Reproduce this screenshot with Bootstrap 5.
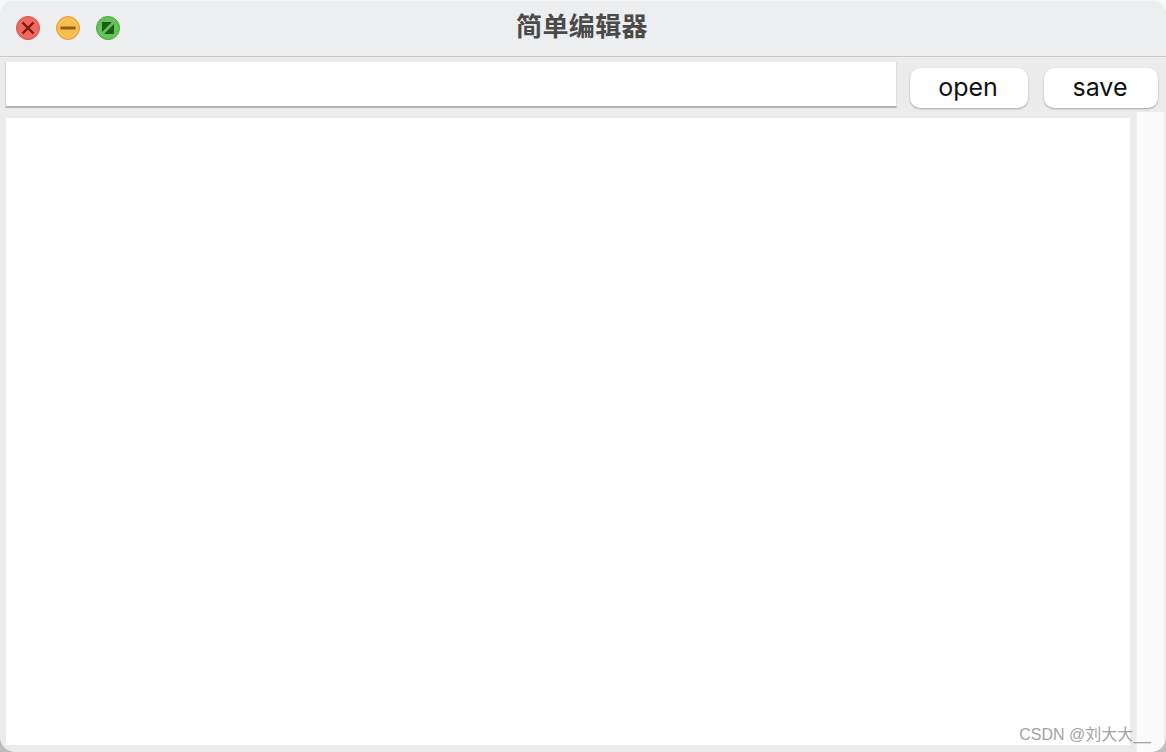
<!DOCTYPE html>
<html lang="zh">

<head>
    <meta charset="UTF-8">
    <meta name="viewport" content="width=device-width, initial-scale=1">
    <title>简单编辑器</title>
    <link href="https://cdn.jsdelivr.net/npm/bootstrap@5.3.0/dist/css/bootstrap.min.css" rel="stylesheet">
    <style>
        html, body { height: 100%; }

        body {
            background: linear-gradient(#f8f8f8 0 50%, #bdbdbd 50%);
            font-family: Inter, "Liberation Sans", "Noto Sans CJK SC", sans-serif;
        }

        .app-window {
            height: 752px;
            background: #ececec;
            border-radius: 15px;
            overflow: hidden;
            position: relative;
        }

        .title-bar {
            height: 57px;
            background: #edeef0;
            border-bottom: 1px solid #c8c8c8;
            box-shadow: inset 0 1px 0 #f7f7f8;
            padding-left: 16px;
            gap: 16px;
        }

        .title-text {
            font-family: "Noto Sans CJK SC", sans-serif;
            font-size: 26px;
            font-weight: 700;
            letter-spacing: 0.4px;
            color: #4a4a4a;
            line-height: 1;
            margin-top: -3px;
            margin-left: -1px;
        }

        .light-btn { width: 24px; height: 24px; display: block; }

        .tool-row { height: 55px; padding-left: 5px; }

        .path-input {
            width: 892px;
            height: 46px;
            margin-top: 5px;
            background: #fff;
            border: 0;
            border-left: 1px solid #d6d6d6;
            border-right: 1px solid #dedede;
            border-bottom: 2px solid #b4b4b4;
            border-radius: 0;
            outline: 0;
        }

        .tool-btn {
            height: 40px;
            margin-top: 11px;
            background: #fff;
            border: 0;
            border-radius: 10px;
            box-shadow: 0 1px 2px rgba(0, 0, 0, .32);
            font-size: 25px;
            line-height: 1;
            color: #111;
            padding: 0 2px 2px 0;
        }

        .btn-open { width: 118px; margin-left: 13px; }
        .btn-save { width: 114px; margin-left: 16px; }

        .edit-row { height: 640px; padding-left: 6px; }

        .edit-area {
            width: 1124px;
            height: 627px;
            margin-top: 6px;
            background: #fff;
            border: 0;
            border-radius: 0;
            outline: 0;
            resize: none;
        }

        .scroll-track {
            width: 28px;
            margin-left: 6px;
            background: #fafafa;
            border-left: 1px solid #f1f1f1;
        }

        .csdn-mark {
            position: absolute;
            right: 15px;
            bottom: 8px;
            font-family: "Liberation Sans", "Noto Sans CJK SC", sans-serif;
            font-size: 16px;
            line-height: 19px;
            color: #a3a3a3;
        }
    </style>
</head>

<body>

    <div class="app-window d-flex flex-column">

        <!-- Title bar -->
        <div class="title-bar d-flex align-items-center position-relative flex-shrink-0">
            <svg class="light-btn" viewBox="0 0 24 24">
                <circle cx="12" cy="12" r="11.5" fill="#ee6a5f" stroke="#d0534a" />
                <path d="M6.5 6.5l11 11M17.5 6.5l-11 11" stroke="#7d1a14" stroke-width="2.4" fill="none" />
            </svg>
            <svg class="light-btn" viewBox="0 0 24 24">
                <circle cx="12" cy="12" r="11.5" fill="#f6bd4f" stroke="#dc9f3b" />
                <path d="M4.5 12h15" stroke="#94611a" stroke-width="3" fill="none" />
            </svg>
            <svg class="light-btn" viewBox="0 0 24 24">
                <circle cx="12" cy="12" r="11.5" fill="#61c454" stroke="#4aa83e" />
                <path d="M6 6h10L6 16zM18 8v10H8z" fill="#1f5a17" />
            </svg>
            <div class="title-text position-absolute top-50 start-50 translate-middle">简单编辑器</div>
        </div>

        <!-- Path and buttons -->
        <div class="tool-row d-flex align-items-start flex-shrink-0">
            <input class="path-input" type="text">
            <button class="tool-btn btn-open" type="button">open</button>
            <button class="tool-btn btn-save" type="button">save</button>
        </div>

        <!-- Text area and scroll bar -->
        <div class="edit-row d-flex align-items-stretch">
            <textarea class="edit-area"></textarea>
            <div class="scroll-track"></div>
        </div>

        <div class="csdn-mark">CSDN @刘大大__</div>
    </div>

    <script src="https://cdn.jsdelivr.net/npm/bootstrap@5.3.0/dist/js/bootstrap.bundle.min.js"></script>

</body>

</html>
